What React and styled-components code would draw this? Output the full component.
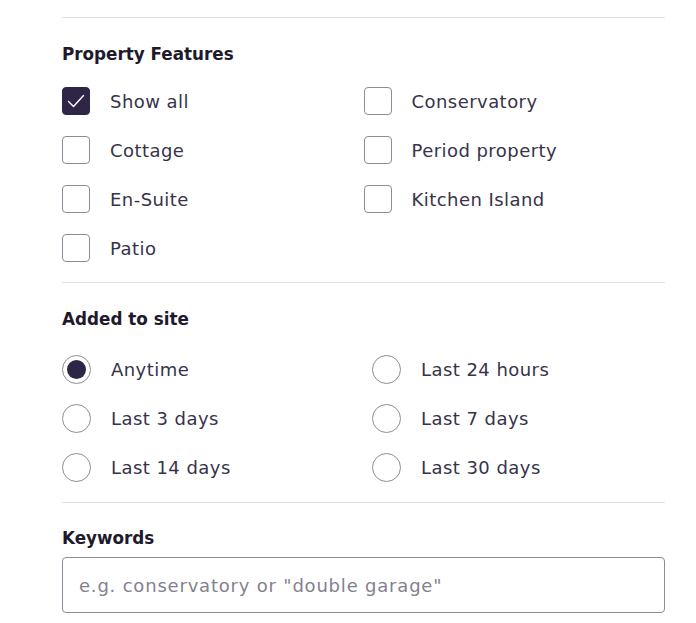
import React, { useState } from "react";
import styled, { createGlobalStyle } from "styled-components";

const GlobalStyle = createGlobalStyle`
  body {
    margin: 0;
    background: #ffffff;
    font-family: "DejaVu Sans", "Noto Sans", sans-serif;
  }
`;

const Panel = styled.div`
  width: 603px;
  padding: 17px 0 10px 62px;
`;

const Divider = styled.hr`
  margin: 0;
  border: none;
  border-top: 1px solid #e3e2e6;
`;

const Section = styled.section`
  padding: ${(p) => p.$top || 26}px 0 20px;
`;

const Heading = styled.h3`
  margin: 0 0 ${(p) => p.$gap || 23}px;
  font-size: 16.8px;
  line-height: 20px;
  font-weight: 700;
  color: #1e1a2c;
`;

const OptionGrid = styled.div`
  display: grid;
  grid-template-columns: ${(p) => p.$cols};
  row-gap: ${(p) => p.$rowGap}px;
`;

const Option = styled.label`
  display: flex;
  align-items: center;
  gap: ${(p) => p.$gap}px;
  font-size: 18px;
  letter-spacing: 0.45px;
  color: #37334a;
  cursor: pointer;
`;

const Box = styled.span`
  width: 28px;
  height: 28px;
  box-sizing: border-box;
  border-radius: 4px;
  border: 1px solid ${(p) => (p.$checked ? "#2e2547" : "#8e8b98")};
  background: ${(p) => (p.$checked ? "#2e2547" : "#fff")};
  display: flex;
  align-items: center;
  justify-content: center;
  flex-shrink: 0;
`;

const Radio = styled.span`
  width: 29px;
  height: 29px;
  box-sizing: border-box;
  border-radius: 50%;
  border: 1px solid #8e8b98;
  display: flex;
  align-items: center;
  justify-content: center;
  flex-shrink: 0;
  &::after {
    content: "";
    width: 19px;
    height: 19px;
    border-radius: 50%;
    background: ${(p) => (p.$checked ? "#2e2547" : "transparent")};
  }
`;

const KeywordInput = styled.input`
  display: block;
  width: 100%;
  height: 56px;
  box-sizing: border-box;
  border: 1px solid #8e8b98;
  border-radius: 4px;
  padding: 0 16px;
  font-family: inherit;
  font-size: 18px;
  letter-spacing: 0.8px;
  color: #37334a;
  outline: none;
  &::placeholder {
    color: #84818f;
  }
`;

const features = [
  "Show all",
  "Conservatory",
  "Cottage",
  "Period property",
  "En-Suite",
  "Kitchen Island",
  "Patio",
];

const periods = [
  "Anytime",
  "Last 24 hours",
  "Last 3 days",
  "Last 7 days",
  "Last 14 days",
  "Last 30 days",
];

const Check = () => (
  <svg width="18" height="14" viewBox="0 0 18 14" fill="none">
    <path d="M1.5 7.5 L6.5 12.5 L16.5 1.5" stroke="#fff" strokeWidth="1.4" strokeLinecap="round" strokeLinejoin="round" />
  </svg>
);

export default function App() {
  const [checked, setChecked] = useState(["Show all"]);
  const [period, setPeriod] = useState("Anytime");

  const toggle = (name) =>
    setChecked((c) => (c.includes(name) ? c.filter((x) => x !== name) : [...c, name]));

  return (
    <>
      <GlobalStyle />
      <Panel>
        <Divider />
        <Section>
          <Heading>Property Features</Heading>
          <OptionGrid $cols="1fr 1fr" $rowGap={21}>
            {features.map((f) => (
              <Option key={f} $gap={20} onClick={() => toggle(f)}>
                <Box $checked={checked.includes(f)}>
                  {checked.includes(f) && <Check />}
                </Box>
                {f}
              </Option>
            ))}
          </OptionGrid>
        </Section>
        <Divider />
        <Section>
          <Heading $gap={26}>Added to site</Heading>
          <OptionGrid $cols="310px 1fr" $rowGap={20}>
            {periods.map((p) => (
              <Option key={p} $gap={20} onClick={() => setPeriod(p)}>
                <Radio $checked={period === p} />
                {p}
              </Option>
            ))}
          </OptionGrid>
        </Section>
        <Divider />
        <Section $top={25}>
          <Heading $gap={9}>Keywords</Heading>
          <KeywordInput placeholder={'e.g. conservatory or "double garage"'} />
        </Section>
      </Panel>
    </>
  );
}
